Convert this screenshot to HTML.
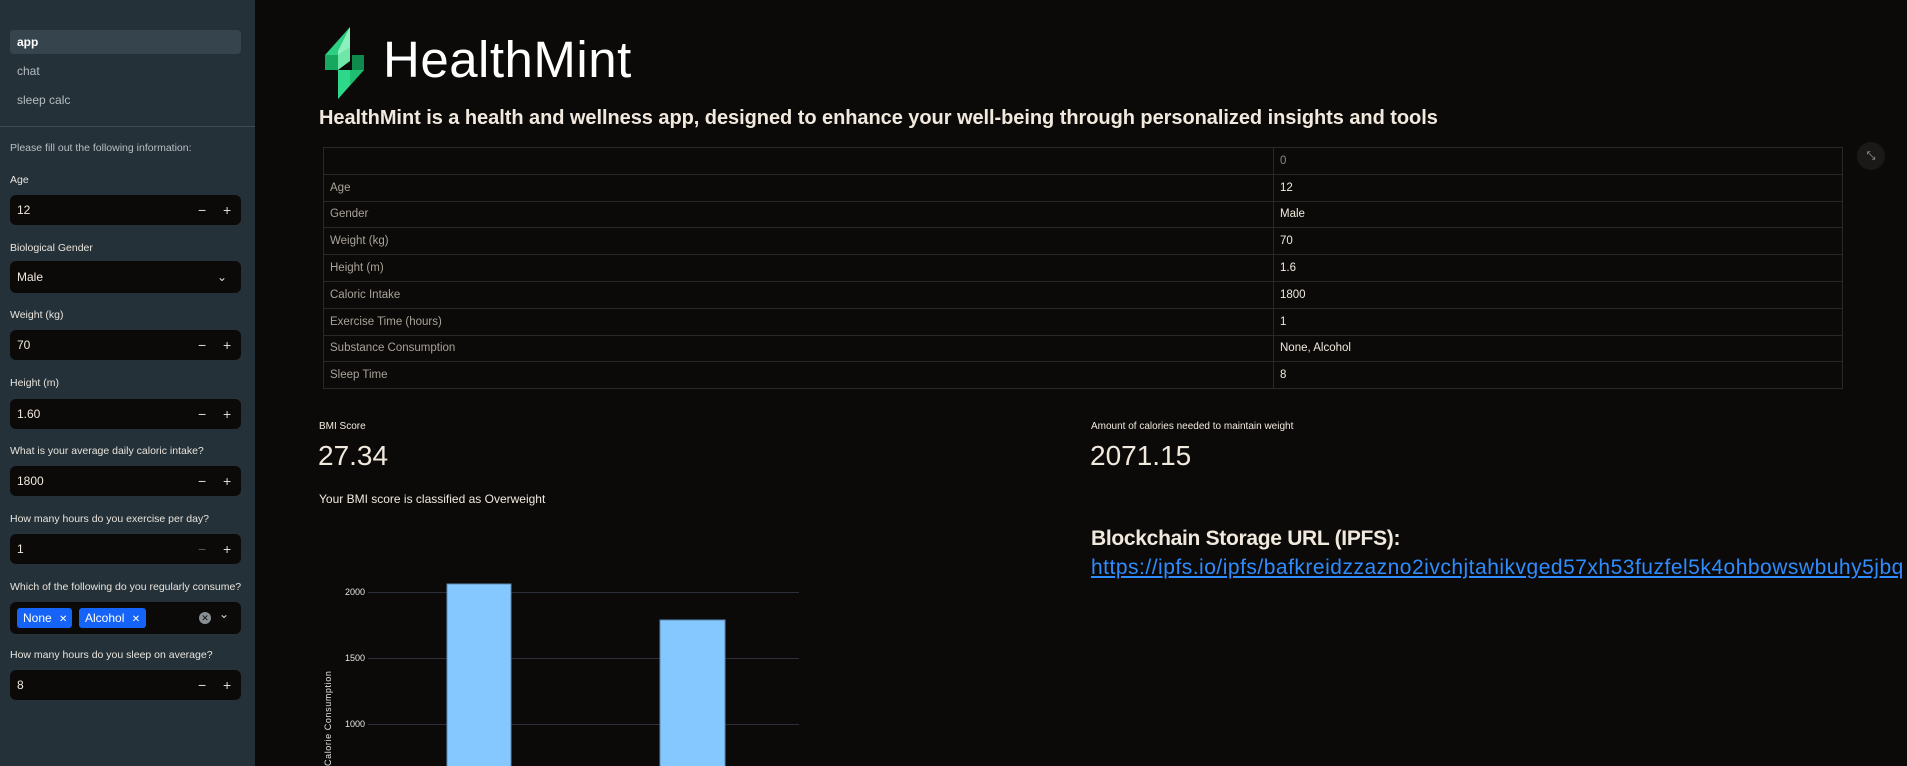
<!DOCTYPE html>
<html><head><meta charset="utf-8"><style>
*{box-sizing:border-box;margin:0;padding:0}
body{width:1907px;height:766px;overflow:hidden;background:#0b0a09;font-family:"Liberation Sans",sans-serif;color:#f1e9dd;position:relative}
.a{position:absolute;white-space:nowrap}
#sb{position:absolute;left:0;top:0;width:255px;height:766px;background:#243139}
.nav{position:absolute;left:10px;width:231px;height:24px;font-size:12px;line-height:24px;padding-left:7px;color:#b6bcc0}
.lbl{position:absolute;left:10px;font-size:10.5px;color:#e8e4dc}
.inp{position:absolute;left:10px;width:231px;height:30px;background:#0b0a09;border-radius:6px;font-size:12px;line-height:30px;padding-left:7px;color:#f1e9dd}
.inp .m{position:absolute;left:188px;top:0;font-size:14px;color:#ddd}
.inp .p{position:absolute;left:213px;top:0;font-size:14px;color:#ddd}
table{position:absolute;left:323px;top:147px;width:1520px;border-collapse:collapse;font-size:11.5px}
td{border:1px solid #2a2826;height:26.8px;padding-left:6px;color:#f1e9dd}
td:first-child{width:950px;color:#a9a298}
.chip{position:absolute;top:608px;height:20px;background:#1663f7;border-radius:3px;font-size:12px;line-height:20px;padding-left:6px;color:#fff}
</style></head><body>
<div id="sb">
 <div class="nav" style="top:30px;background:#36454d;border-radius:4px;color:#fff;font-weight:bold">app</div>
 <div class="nav" style="top:59px">chat</div>
 <div class="nav" style="top:88px">sleep calc</div>
 <div class="a" style="left:0;top:126px;width:255px;height:1px;background:#3e4b52"></div>
 <div class="lbl" style="top:142px;color:#b8bec2">Please fill out the following information:</div>
 <div class="lbl" style="top:174px">Age</div>
 <div class="inp" style="top:195px">12<span class="m">−</span><span class="p">+</span></div>
 <div class="lbl" style="top:242px">Biological Gender</div>
 <div class="inp" style="top:261px;height:32px;line-height:32px">Male<span class="p" style="left:207px;font-size:12px">⌄</span></div>
 <div class="lbl" style="top:309px">Weight (kg)</div>
 <div class="inp" style="top:330px">70<span class="m">−</span><span class="p">+</span></div>
 <div class="lbl" style="top:377px">Height (m)</div>
 <div class="inp" style="top:399px">1.60<span class="m">−</span><span class="p">+</span></div>
 <div class="lbl" style="top:445px">What is your average daily caloric intake?</div>
 <div class="inp" style="top:466px">1800<span class="m">−</span><span class="p">+</span></div>
 <div class="lbl" style="top:513px">How many hours do you exercise per day?</div>
 <div class="inp" style="top:534px">1<span class="m" style="color:#555">−</span><span class="p">+</span></div>
 <div class="lbl" style="top:581px">Which of the following do you regularly consume?</div>
 <div class="inp" style="top:602px;height:32px"></div>
 <div class="chip" style="left:17px;width:55px">None <span style="font-size:10px;margin-left:4px">✕</span></div>
 <div class="chip" style="left:79px;width:67px">Alcohol <span style="font-size:10px;margin-left:4px">✕</span></div>
 <div class="a" style="left:199px;top:612px;width:12px;height:12px;border-radius:6px;background:#8a8f94;color:#111;font-size:9px;line-height:12px;text-align:center">✕</div>
 <div class="a" style="left:219px;top:607px;font-size:12px;color:#ddd">⌄</div>
 <div class="lbl" style="top:649px">How many hours do you sleep on average?</div>
 <div class="inp" style="top:670px">8<span class="m">−</span><span class="p">+</span></div>
</div>

<svg class="a" style="left:323px;top:25px" width="44" height="76" viewBox="0 0 44 76">
 <polygon points="27,2 27,22 15,36 2,36 2,30" fill="#2ecf82"/>
 <polygon points="27,2 27,22 15,36 15,26" fill="#8ef0bd"/>
 <polygon points="2,30 15,30 15,45 2,45" fill="#16a85e"/>
 <polygon points="15,30 27,22 27,36 15,45" fill="#6ee8a8"/>
 <polygon points="29,30 41,30 41,45 29,45" fill="#0f8a4c"/>
 <polygon points="15,45 41,45 15,74" fill="#1fbf70"/>
 <polygon points="15,45 27,45 27,60 15,74" fill="#2ed88a"/>
</svg>
<div class="a" style="left:383px;top:30px;font-size:51px;color:#fff;letter-spacing:0.5px">HealthMint</div>
<div class="a" style="left:319px;top:107px;font-size:20px;font-weight:bold;letter-spacing:-0.05px;color:#f1e9dd">HealthMint is a health and wellness app, designed to enhance your well-being through personalized insights and tools</div>

<table>
<tr><td></td><td style="color:#8d877f">0</td></tr>
<tr><td>Age</td><td>12</td></tr>
<tr><td>Gender</td><td>Male</td></tr>
<tr><td>Weight (kg)</td><td>70</td></tr>
<tr><td>Height (m)</td><td>1.6</td></tr>
<tr><td>Caloric Intake</td><td>1800</td></tr>
<tr><td>Exercise Time (hours)</td><td>1</td></tr>
<tr><td>Substance Consumption</td><td>None, Alcohol</td></tr>
<tr><td>Sleep Time</td><td>8</td></tr>
</table>
<div class="a" style="left:1857px;top:142px;width:28px;height:28px;border-radius:14px;background:#1a1918;color:#aaa;font-size:11px;text-align:center;line-height:28px">⤡</div>

<div class="a" style="left:319px;top:421px;font-size:10px">BMI Score</div>
<div class="a" style="left:318px;top:440px;font-size:28px">27.34</div>
<div class="a" style="left:319px;top:492px;font-size:12px">Your BMI score is classified as Overweight</div>

<div class="a" style="left:1091px;top:421px;font-size:10px">Amount of calories needed to maintain weight</div>
<div class="a" style="left:1090px;top:440px;font-size:28px">2071.15</div>
<div class="a" style="left:1091px;top:527px;font-size:21px;font-weight:bold;letter-spacing:-0.3px">Blockchain Storage URL (IPFS):</div>
<div class="a" style="left:1091px;top:556px;font-size:21px;color:#2f8cff;text-decoration:underline;letter-spacing:0.5px;width:816px;overflow:hidden">https://ipfs.io/ipfs/bafkreidzzazno2ivchjtahikvged57xh53fuzfel5k4ohbowswbuhy5jbq</div>

<svg class="a" style="left:315px;top:560px" width="500" height="206">
 <g stroke="#2c3038" stroke-width="1">
  <line x1="368" y1="32.5" x2="799" y2="32.5" transform="translate(-315,0)"/>
  <line x1="368" y1="98.5" x2="799" y2="98.5" transform="translate(-315,0)"/>
  <line x1="368" y1="164.5" x2="799" y2="164.5" transform="translate(-315,0)"/>
 </g>
 <g fill="#e6e6e6" font-size="9" font-family="Liberation Sans" text-anchor="end">
  <text x="50" y="35">2000</text><text x="50" y="101">1500</text><text x="50" y="167">1000</text>
 </g>
 <rect x="132" y="24" width="64" height="190" fill="#85c8ff" stroke="#5a8ab5"/>
 <rect x="345" y="60" width="65" height="160" fill="#85c8ff" stroke="#5a8ab5"/>
 <text transform="translate(16,206) rotate(-90)" fill="#e6e6e6" font-size="9" font-family="Liberation Sans" letter-spacing="0.6">Calorie Consumption</text>
</svg>
</body></html>
